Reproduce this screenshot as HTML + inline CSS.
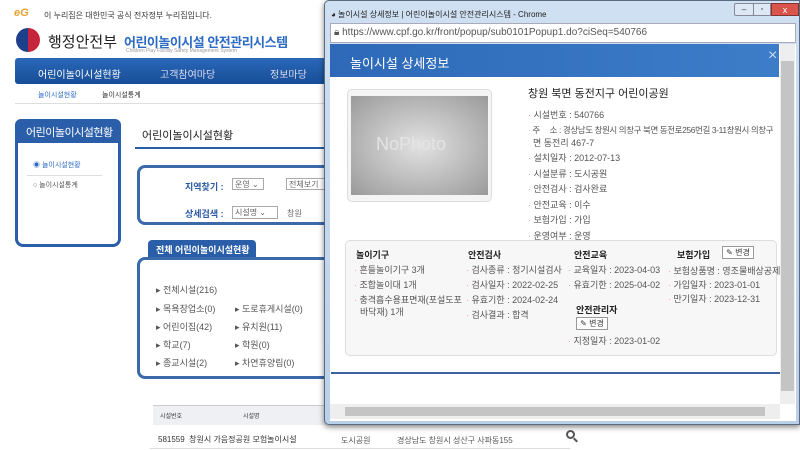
<!DOCTYPE html>
<html><head><meta charset="utf-8"><style>
*{margin:0;padding:0;box-sizing:border-box}
body{width:800px;height:450px;overflow:hidden;background:#fff;font-family:"Liberation Sans","Noto Sans CJK KR",sans-serif;position:relative;color:#333}
.a{position:absolute;white-space:nowrap}
.s{font-size:9px;color:#555}
.dot{color:#e9a}
</style></head><body>
<!-- background site -->
<div class="a" style="left:14px;top:7px;font-size:11px;color:#e8a030;font-weight:bold;font-style:italic">eG</div>
<div class="a s" style="left:44px;top:10px;color:#333;font-size:8px">이 누리집은 대한민국 공식 전자정부 누리집입니다.</div>
<div class="a" style="left:16px;top:28px;width:24px;height:24px;border-radius:50%;background:conic-gradient(#c6243a 0 50%,#1d3f8c 50% 100%)"></div>
<div class="a" style="left:48px;top:31px;font-size:15px;color:#222">행정안전부</div>
<div class="a" style="left:124px;top:32px;font-size:13px;color:#2c6bc4;font-weight:bold;letter-spacing:-0.5px">어린이놀이시설 안전관리시스템</div>
<div class="a" style="left:126px;top:48px;font-size:5px;color:#999">Children Play Facility Safety Management System</div>
<div class="a" style="left:15px;top:58px;width:315px;height:26px;background:linear-gradient(#2a68b8,#174e98);border-radius:3px"></div>
<div class="a" style="left:38px;top:66px;font-size:10px;color:#fff">어린이놀이시설현황</div>
<div class="a" style="left:160px;top:66px;font-size:10px;color:#dde">고객참여마당</div>
<div class="a" style="left:270px;top:66px;font-size:10px;color:#dde">정보마당</div>
<div class="a" style="left:15px;top:86px;width:315px;height:18px;border-bottom:1px solid #ddd"></div>
<div class="a" style="left:38px;top:90px;font-size:7px;color:#2c6bc4">놀이시설현황</div>
<div class="a" style="left:102px;top:90px;font-size:7px;color:#333">놀이시설통계</div>
<div class="a" style="left:15px;top:119px;width:106px;height:128px;border:3px solid #2a5ea8;border-radius:8px;background:#fff"></div>
<div class="a" style="left:15px;top:119px;width:106px;height:24px;background:#2a5ea8;border-radius:6px 6px 0 0"></div>
<div class="a" style="left:26px;top:124px;font-size:11px;color:#fff;letter-spacing:-0.5px">어린이놀이시설현황</div>
<div class="a" style="left:33px;top:160px;font-size:7px;color:#2c6bc4">◉ 놀이시설현황</div>
<div class="a" style="left:27px;top:175px;width:75px;border-top:1px solid #ddd"></div>
<div class="a" style="left:33px;top:180px;font-size:7px;color:#555">○ 놀이시설통계</div>
<div class="a" style="left:142px;top:127px;font-size:11px;color:#222">어린이놀이시설현황</div>
<div class="a" style="left:135px;top:147px;width:195px;border-top:2px solid #2a5ea8"></div>
<div class="a" style="left:137px;top:165px;width:200px;height:60px;border:3px solid #3a6aaa;border-radius:8px"></div>
<div class="a" style="left:185px;top:180px;font-size:9px;color:#2c5aa8;font-weight:bold">지역찾기 :</div>
<div class="a" style="left:232px;top:178px;width:32px;height:12px;border:1px solid #aaa;font-size:8px;color:#666;padding-left:2px">운영 ⌄</div>
<div class="a" style="left:286px;top:178px;width:40px;height:12px;border:1px solid #aaa;font-size:8px;color:#666;padding-left:2px">전체보기</div>
<div class="a" style="left:185px;top:207px;font-size:9px;color:#2c5aa8;font-weight:bold">상세검색 :</div>
<div class="a" style="left:232px;top:206px;width:46px;height:13px;border:1px solid #aaa;font-size:8px;color:#666;padding-left:2px">시설명 ⌄</div>
<div class="a" style="left:287px;top:208px;font-size:8px;color:#666">창원</div>
<div class="a" style="left:148px;top:240px;width:108px;height:17px;background:#2a5ea8;border-radius:4px 4px 0 0"></div>
<div class="a" style="left:156px;top:243px;font-size:9px;color:#fff;font-weight:bold">전체 어린이놀이시설현황</div>
<div class="a" style="left:137px;top:257px;width:200px;height:122px;border:3px solid #3a6aaa;border-radius:8px"></div>
<div class="a s" style="left:156px;top:283px">▸ 전체시설(216)</div>
<div class="a s" style="left:156px;top:302px">▸ 목욕장업소(0)</div><div class="a s" style="left:235px;top:302px">▸ 도로휴게시설(0)</div>
<div class="a s" style="left:156px;top:320px">▸ 어린이집(42)</div><div class="a s" style="left:235px;top:320px">▸ 유치원(11)</div>
<div class="a s" style="left:156px;top:338px">▸ 학교(7)</div><div class="a s" style="left:235px;top:338px">▸ 학원(0)</div>
<div class="a s" style="left:156px;top:356px">▸ 종교시설(2)</div><div class="a s" style="left:235px;top:356px">▸ 차연휴양림(0)</div>
<div class="a" style="left:153px;top:405px;width:180px;height:20px;background:#eef0f4;border-top:1px solid #ccc"></div>
<div class="a" style="left:160px;top:411px;font-size:6px;color:#333">시설번호</div>
<div class="a" style="left:243px;top:411px;font-size:6px;color:#333">시설명</div>
<div class="a" style="left:158px;top:434px;font-size:8px;color:#333">581559 &nbsp;창원시 가음정공원 모험놀이시설</div>
<div class="a" style="left:150px;top:448px;width:420px;border-top:1px solid #ddd"></div>
<div class="a" style="left:341px;top:435px;font-size:8px;color:#555">도시공원</div>
<div class="a" style="left:397px;top:435px;font-size:8px;color:#555">경상남도 창원시 성산구 사파동155</div>
<div class="a" style="left:566px;top:430px;width:9px;height:9px;border:2px solid #555;border-radius:50%"></div>
<div class="a" style="left:573px;top:439px;width:5px;height:2px;background:#555;transform:rotate(45deg)"></div>

<!-- popup window -->
<div class="a" style="left:324px;top:0;width:476px;height:425px;background:linear-gradient(#cfe0f2,#b9d0ea);border:1px solid #5a6a80;border-radius:5px 0 0 5px;box-shadow:0 2px 6px rgba(0,0,0,.5)"></div>
<div class="a" style="left:331px;top:9px;font-size:8px;color:#222">◕ 놀이시설 상세정보 | 어린이놀이시설 안전관리시스템 - Chrome</div>
<div class="a" style="left:734px;top:3px;width:20px;height:13px;border:1px solid #889;border-radius:2px;background:#dde8f4;font-size:8px;text-align:center;line-height:11px">–</div>
<div class="a" style="left:753px;top:3px;width:18px;height:13px;border:1px solid #889;background:#dde8f4;font-size:7px;text-align:center;line-height:11px">▫</div>
<div class="a" style="left:771px;top:3px;width:28px;height:13px;border:1px solid #833;background:#d9544a;color:#fff;font-size:9px;text-align:center;line-height:12px">x</div>
<div class="a" style="left:330px;top:23px;width:466px;height:20px;background:#fff;border:1px solid #aab"></div>
<div class="a" style="left:334px;top:27px;font-size:10px;color:#555">🔒︎ https://www.cpf.go.kr/front/popup/sub0101Popup1.do?ciSeq=540766</div>
<div class="a" style="left:330px;top:44px;width:466px;height:377px;background:#fff"></div>
<div class="a" style="left:330px;top:44px;width:449px;height:33px;background:linear-gradient(90deg,#2d69b8,#3d7dc8)"></div>
<div class="a" style="left:350px;top:53px;font-size:13px;color:#fff">놀이시설 상세정보</div>
<div class="a" style="left:768px;top:47px;font-size:16px;color:#c8dcf2">×</div>
<div class="a" style="left:780px;top:44px;width:15px;height:360px;background:#eee"></div>
<div class="a" style="left:781px;top:61px;width:13px;height:330px;background:#c4c4c4"></div>
<div class="a" style="left:330px;top:404px;width:450px;height:15px;background:#eee"></div>
<div class="a" style="left:345px;top:407px;width:420px;height:9px;background:#c4c4c4"></div>
<!-- photo -->
<div class="a" style="left:347px;top:89px;width:145px;height:113px;border:1px solid #ddd;border-radius:5px;background:#f4f4f4"></div>
<div class="a" style="left:351px;top:96px;width:137px;height:99px;background:radial-gradient(ellipse at center,#e2e2e2,#9a9a9a)"></div>
<div class="a" style="left:376px;top:134px;font-size:18px;color:#e4e4e4">NoPhoto</div>
<div class="a" style="left:528px;top:85px;font-size:11px;color:#222">창원 북면 동전지구 어린이공원</div>
<div class="a s" style="left:528px;top:108px"><span class="dot">·</span> 시설번호 : 540766</div>
<div class="a s" style="left:528px;top:124px;letter-spacing:-0.4px;font-size:8.5px"><span class="dot">·</span> 주 &nbsp; &nbsp; 소 : 경상남도 창원시 의창구 북면 동전로256번길 3-11창원시 의창구</div>
<div class="a s" style="left:533px;top:136px">면 동전리 467-7</div>
<div class="a s" style="left:528px;top:151px"><span class="dot">·</span> 설치일자 : 2012-07-13</div>
<div class="a s" style="left:528px;top:167px"><span class="dot">·</span> 시설분류 : 도시공원</div>
<div class="a s" style="left:528px;top:182px"><span class="dot">·</span> 안전검사 : 검사완료</div>
<div class="a s" style="left:528px;top:198px"><span class="dot">·</span> 안전교육 : 이수</div>
<div class="a s" style="left:528px;top:213px"><span class="dot">·</span> 보험가입 : 가입</div>
<div class="a s" style="left:528px;top:229px"><span class="dot">·</span> 운영여부 : 운영</div>
<div class="a" style="left:345px;top:240px;width:432px;height:116px;border:1px solid #ddd;border-radius:5px;background:#f7f7f7"></div>
<div class="a" style="left:356px;top:248px;font-size:9px;font-weight:bold;color:#222">놀이기구</div>
<div class="a s" style="left:354px;top:263px"><span class="dot">·</span> 흔들놀이기구 3개</div>
<div class="a s" style="left:354px;top:278px"><span class="dot">·</span> 조합놀이대 1개</div>
<div class="a s" style="left:354px;top:293px"><span class="dot">·</span> 충격흡수용표면재(포설도포</div>
<div class="a s" style="left:360px;top:305px">바닥재) 1개</div>
<div class="a" style="left:468px;top:248px;font-size:9px;font-weight:bold;color:#222">안전검사</div>
<div class="a s" style="left:466px;top:263px"><span class="dot">·</span> 검사종류 : 정기시설검사</div>
<div class="a s" style="left:466px;top:278px"><span class="dot">·</span> 검사일자 : 2022-02-25</div>
<div class="a s" style="left:466px;top:293px"><span class="dot">·</span> 유효기한 : 2024-02-24</div>
<div class="a s" style="left:466px;top:308px"><span class="dot">·</span> 검사결과 : 합격</div>
<div class="a" style="left:574px;top:248px;font-size:9px;font-weight:bold;color:#222">안전교육</div>
<div class="a s" style="left:568px;top:263px"><span class="dot">·</span> 교육일자 : 2023-04-03</div>
<div class="a s" style="left:568px;top:278px"><span class="dot">·</span> 유효기한 : 2025-04-02</div>
<div class="a" style="left:576px;top:303px;font-size:9px;font-weight:bold;color:#222">안전관리자</div>
<div class="a" style="left:576px;top:317px;width:32px;height:13px;border:1px solid #999;background:#fff;font-size:8px;text-align:center;line-height:11px">✎ 변경</div>
<div class="a s" style="left:568px;top:334px"><span class="dot">·</span> 지정일자 : 2023-01-02</div>
<div class="a" style="left:677px;top:248px;font-size:9px;font-weight:bold;color:#222">보험가입</div>
<div class="a" style="left:722px;top:246px;width:32px;height:13px;border:1px solid #999;background:#fff;font-size:8px;text-align:center;line-height:11px">✎ 변경</div>
<div class="a s" style="left:668px;top:264px"><span class="dot">·</span> 보험상품명 : 영조물배상공제</div>
<div class="a s" style="left:668px;top:278px"><span class="dot">·</span> 가입일자 : 2023-01-01</div>
<div class="a s" style="left:668px;top:292px"><span class="dot">·</span> 만기일자 : 2023-12-31</div>
<div class="a" style="left:331px;top:372px;width:449px;border-top:2px solid #3a64a0"></div>
</body></html>
